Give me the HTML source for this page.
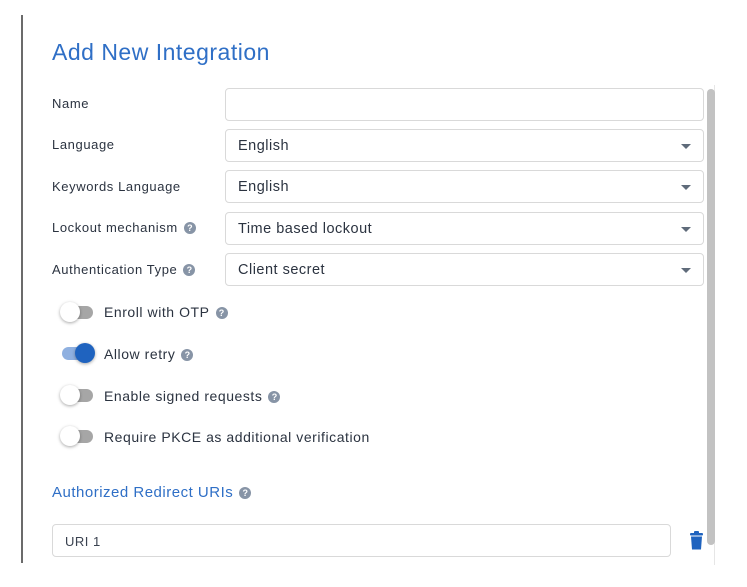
<!DOCTYPE html>
<html><head><style>
body{margin:0;width:747px;height:587px;background:#fff;font-family:"Liberation Sans",sans-serif;position:relative;overflow:hidden;color:#2b3340}
.a{position:absolute}
.vl{left:21px;top:15px;width:2px;height:548px;background:#6b6b6b}
h1{position:absolute;left:52px;top:39px;margin:0;font-weight:normal;font-size:23px;color:#2f6fc6;letter-spacing:0.5px}
.lbl{position:absolute;left:52px;font-size:13px;color:#2b3340;letter-spacing:0.6px}
.inp{position:absolute;left:225px;width:479px;height:33px;border:1px solid #d9d9d9;border-radius:4px;box-sizing:border-box;font-size:14.5px;line-height:33px;padding-left:12px;color:#2b3340;letter-spacing:0.5px}
.car{position:absolute;right:12px;top:14px;width:0;height:0;border-left:5px solid transparent;border-right:5px solid transparent;border-top:5px solid #5f6b7a}
.q{display:inline-block;width:12px;height:12px;border-radius:50%;background:#8794a6;color:#fff;font-size:9px;line-height:12px;text-align:center;font-weight:bold;vertical-align:1px;margin-left:6px;letter-spacing:0}
.tg{position:absolute;left:62px;width:31px;height:13px;border-radius:7px;background:#a6a6a6}
.kn{position:absolute;top:-4px;width:20px;height:20px;border-radius:50%;background:#fff;box-shadow:0 1px 3px rgba(0,0,0,.35)}
.tt{position:absolute;left:104px;font-size:14px;color:#2b3340;letter-spacing:0.55px}
</style></head><body>
<div class="a vl"></div>
<h1>Add New Integration</h1>
<div class="lbl" style="top:96px">Name</div>
<div class="inp" style="top:88px"></div>
<div class="lbl" style="top:137px">Language</div>
<div class="inp" style="top:129px">English<div class="car"></div></div>
<div class="lbl" style="top:179px">Keywords Language</div>
<div class="inp" style="top:170px">English<div class="car"></div></div>
<div class="lbl" style="top:220px">Lockout mechanism<span class="q">?</span></div>
<div class="inp" style="top:212px">Time based lockout<div class="car"></div></div>
<div class="lbl" style="top:262px">Authentication Type<span class="q">?</span></div>
<div class="inp" style="top:253px">Client secret<div class="car"></div></div>

<div class="tg" style="top:306px"><div class="kn" style="left:-2px"></div></div>
<div class="tt" style="top:304px">Enroll with OTP<span class="q">?</span></div>
<div class="tg" style="top:347px;background:#8fb0e0"><div class="kn" style="left:13px;background:#1f63bf"></div></div>
<div class="tt" style="top:346px">Allow retry<span class="q">?</span></div>
<div class="tg" style="top:389px"><div class="kn" style="left:-2px"></div></div>
<div class="tt" style="top:388px">Enable signed requests<span class="q">?</span></div>
<div class="tg" style="top:430px"><div class="kn" style="left:-2px"></div></div>
<div class="tt" style="top:429px">Require PKCE as additional verification</div>

<div class="a" style="left:52px;top:484px;font-size:15px;color:#2f6fc6;letter-spacing:0.5px">Authorized Redirect URIs<span class="q">?</span></div>
<div class="inp" style="left:52px;top:524px;width:619px;height:33px;font-size:13px;line-height:33px;color:#3a4250">URI 1</div>
<svg class="a" style="left:689px;top:531px" width="15" height="19" viewBox="0 0 15 19"><rect x="1" y="2" width="13" height="2.5" rx="1" fill="#1f63bf"/><rect x="5" y="0" width="5" height="3" rx="1" fill="#1f63bf"/><path d="M2 5.5h11l-1 13h-9z" fill="#1f63bf"/></svg>

<div class="a" style="left:714px;top:85px;width:1px;height:480px;background:#e6e6e6"></div>
<div class="a" style="left:707px;top:89px;width:8px;height:456px;border-radius:4px;background:#c2c2c2"></div>
</body></html>
